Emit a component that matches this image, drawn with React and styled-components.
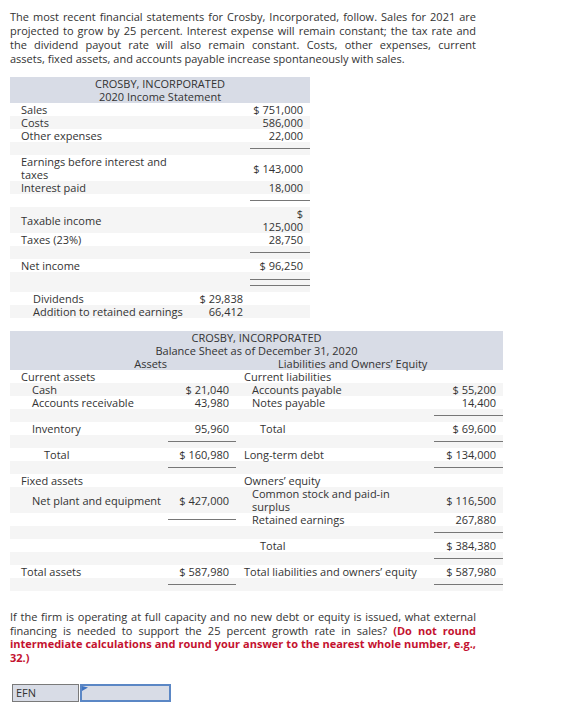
import React from 'react';
import styled, { createGlobalStyle } from 'styled-components';

const GlobalStyle = createGlobalStyle`
  body { margin: 0; background: #fff; }
  * { box-sizing: border-box; }
`;

const Page = styled.div`
  padding: 10px 10px 20px;
  font: 11px/14px 'Open Sans', 'Liberation Sans', sans-serif;
  color: #333;
`;

const Para = styled.p`
  margin: ${p => p.$top || 0}px 0 0;
  width: 466px;
  line-height: ${p => p.$lh || 14}px;
`;

const Line = styled.span`
  display: block;
  text-align: justify;
  text-align-last: ${p => (p.$last ? 'left' : 'justify')};
`;

const Note = styled.span`
  color: #c4122f;
  font-weight: 700;
`;

const Sheet = styled.div`
  margin-top: ${p => p.$top}px;
  width: ${p => p.$width}px;
  line-height: 13px;
`;

const Head = styled.div`
  background: #d8dce6;
  text-align: center;
`;

const Body = styled.div`
  & > div:nth-child(even) { background: #f5f5f5; }
`;

const IncomeRow = styled.div`
  display: grid;
  grid-template-columns: 180px 60px 60px;
  min-height: ${p => p.$h || 13}px;
  align-items: center;
  background: #fff;
`;

const BalanceRow = styled(IncomeRow)`
  grid-template-columns: 158px 68px 198px 69px;
`;

const Cell = styled.div`
  grid-column: ${p => p.$col || 1};
  padding-left: ${p => p.$indent || 0}px;
  white-space: ${p => (p.$nowrap ? 'nowrap' : 'normal')};
`;

const Num = styled.div`
  grid-column: ${p => p.$col};
  text-align: right;
  padding-right: 7px;
`;

const Rule = styled.div`
  grid-column: ${p => p.$col};
  height: ${p => (p.$double ? 7 : 1)}px;
  border-top: 1px solid #777;
  border-bottom: ${p => (p.$double ? '1px solid #777' : 'none')};
  align-self: ${p => (p.$double ? 'start' : 'center')};
  margin-top: ${p => (p.$double ? 7 : 0)}px;
`;

const SideHead = styled(BalanceRow)`
  background: transparent;
`;

const HeadCell = styled.div`
  grid-column: ${p => p.$col};
  text-align: ${p => p.$align || 'left'};
  padding-left: ${p => p.$indent || 0}px;
  padding-right: ${p => p.$right || 0}px;
`;

const Answer = styled.div`
  display: flex;
  gap: 1px;
  margin: 20px 0 0 2px;
  height: 18px;
`;

const AnswerLabel = styled.div`
  width: 67px;
  border: 1px solid #7a7a7a;
  background: #d8dce6;
  padding-left: 3px;
  line-height: 16px;
`;

const AnswerField = styled.div`
  position: relative;
  width: 91px;
`;

const Input = styled.input`
  width: 100%;
  height: 100%;
  margin: 0;
  border: 2px solid #5b87c5;
  background: #d8dce6;
  outline: none;
`;

const Flag = styled.svg`
  position: absolute;
  left: 2px;
  top: 2px;
`;

export default function App() {
  return (
    <Page>
      <GlobalStyle />
      <Para>
        <Line>The most recent financial statements for Crosby, Incorporated, follow. Sales for 2021 are</Line>
        <Line>projected to grow by 25 percent. Interest expense will remain constant; the tax rate and</Line>
        <Line>the dividend payout rate will also remain constant. Costs, other expenses, current</Line>
        <Line $last>assets, fixed assets, and accounts payable increase spontaneously with sales.</Line>
      </Para>

      <Sheet $top={11} $width={300}>
        <Head>
          <div>CROSBY, INCORPORATED</div>
          <div>2020 Income Statement</div>
        </Head>
        <Body>
          <IncomeRow><Cell $indent={11}>Sales</Cell><Num $col={3}>$ 751,000</Num></IncomeRow>
          <IncomeRow><Cell $indent={11}>Costs</Cell><Num $col={3}>586,000</Num></IncomeRow>
          <IncomeRow><Cell $indent={11}>Other expenses</Cell><Num $col={3}>22,000</Num></IncomeRow>
          <IncomeRow><Rule $col={3} /></IncomeRow>
          <IncomeRow $h={26}>
            <Cell $indent={11}>Earnings before interest and<br />taxes</Cell>
            <Num $col={3}>$ 143,000</Num>
          </IncomeRow>
          <IncomeRow><Cell $indent={11}>Interest paid</Cell><Num $col={3}>18,000</Num></IncomeRow>
          <IncomeRow><Rule $col={3} /></IncomeRow>
          <IncomeRow $h={26}>
            <Cell $indent={11}>Taxable income</Cell>
            <Num $col={3}>$<br />125,000</Num>
          </IncomeRow>
          <IncomeRow><Cell $indent={11}>Taxes (23%)</Cell><Num $col={3}>28,750</Num></IncomeRow>
          <IncomeRow><Rule $col={3} /></IncomeRow>
          <IncomeRow><Cell $indent={11}>Net income</Cell><Num $col={3}>$ 96,250</Num></IncomeRow>
          <IncomeRow $h={20}><Rule $col={3} $double /></IncomeRow>
          <IncomeRow><Cell $indent={23}>Dividends</Cell><Num $col={2}>$ 29,838</Num></IncomeRow>
          <IncomeRow><Cell $indent={23} $nowrap>Addition to retained earnings</Cell><Num $col={2}>66,412</Num></IncomeRow>
        </Body>
      </Sheet>

      <Sheet $top={13} $width={493}>
        <Head>
          <div>CROSBY, INCORPORATED</div>
          <div>Balance Sheet as of December 31, 2020</div>
          <SideHead>
            <HeadCell $col={1} $align="right" $right={1}>Assets</HeadCell>
            <HeadCell $col="3 / 5" $indent={42}>Liabilities and Owners’ Equity</HeadCell>
          </SideHead>
        </Head>
        <Body>
          <BalanceRow>
            <Cell $indent={11}>Current assets</Cell>
            <Cell $col={3} $indent={8}>Current liabilities</Cell>
          </BalanceRow>
          <BalanceRow>
            <Cell $indent={22}>Cash</Cell><Num $col={2}>$ 21,040</Num>
            <Cell $col={3} $indent={16}>Accounts payable</Cell><Num $col={4}>$ 55,200</Num>
          </BalanceRow>
          <BalanceRow>
            <Cell $indent={22}>Accounts receivable</Cell><Num $col={2}>43,980</Num>
            <Cell $col={3} $indent={16}>Notes payable</Cell><Num $col={4}>14,400</Num>
          </BalanceRow>
          <BalanceRow><Rule $col={4} /></BalanceRow>
          <BalanceRow>
            <Cell $indent={22}>Inventory</Cell><Num $col={2}>95,960</Num>
            <Cell $col={3} $indent={24}>Total</Cell><Num $col={4}>$ 69,600</Num>
          </BalanceRow>
          <BalanceRow><Rule $col={2} /><Rule $col={4} /></BalanceRow>
          <BalanceRow>
            <Cell $indent={34}>Total</Cell><Num $col={2}>$ 160,980</Num>
            <Cell $col={3} $indent={8}>Long-term debt</Cell><Num $col={4}>$ 134,000</Num>
          </BalanceRow>
          <BalanceRow><Rule $col={2} /><Rule $col={4} /></BalanceRow>
          <BalanceRow>
            <Cell $indent={11}>Fixed assets</Cell>
            <Cell $col={3} $indent={8}>Owners’ equity</Cell>
          </BalanceRow>
          <BalanceRow $h={26}>
            <Cell $indent={22} $nowrap>Net plant and equipment</Cell><Num $col={2}>$ 427,000</Num>
            <Cell $col={3} $indent={16}>Common stock and paid-in<br />surplus</Cell><Num $col={4}>$ 116,500</Num>
          </BalanceRow>
          <BalanceRow>
            <Rule $col={2} />
            <Cell $col={3} $indent={16}>Retained earnings</Cell><Num $col={4}>267,880</Num>
          </BalanceRow>
          <BalanceRow><Rule $col={4} /></BalanceRow>
          <BalanceRow>
            <Cell $col={3} $indent={24}>Total</Cell><Num $col={4}>$ 384,380</Num>
          </BalanceRow>
          <BalanceRow><Rule $col={4} /></BalanceRow>
          <BalanceRow>
            <Cell $indent={11}>Total assets</Cell><Num $col={2}>$ 587,980</Num>
            <Cell $col={3} $indent={8} $nowrap>Total liabilities and owners’ equity</Cell><Num $col={4}>$ 587,980</Num>
          </BalanceRow>
          <BalanceRow><Rule $col={2} /><Rule $col={4} /></BalanceRow>
        </Body>
      </Sheet>

      <Para $top={19} $lh={13.6}>
        <Line>If the firm is operating at full capacity and no new debt or equity is issued, what external</Line>
        <Line>financing is needed to support the 25 percent growth rate in sales? <Note>(Do not round</Note></Line>
        <Line><Note>intermediate calculations and round your answer to the nearest whole number, e.g.,</Note></Line>
        <Line $last><Note>32.)</Note></Line>
      </Para>

      <Answer>
        <AnswerLabel>EFN</AnswerLabel>
        <AnswerField>
          <Input type="text" aria-label="EFN" />
          <Flag width="6" height="5" viewBox="0 0 6 5">
            <polygon points="0,0 6,1.5 0,5" fill="#3f74c2" />
          </Flag>
        </AnswerField>
      </Answer>
    </Page>
  );
}
